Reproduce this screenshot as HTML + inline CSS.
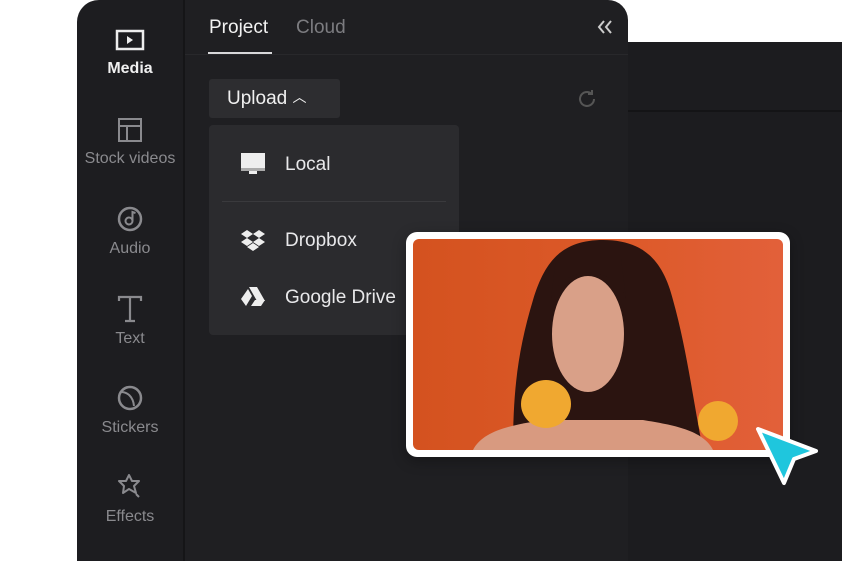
<!DOCTYPE html>
<html><head><style>
*{margin:0;padding:0;box-sizing:border-box}
body{width:842px;height:561px;background:#fff;position:relative;overflow:hidden;font-family:"Liberation Sans",sans-serif}
.a{position:absolute}
.side{left:77px;top:0;width:108px;height:561px;background:#1d1d20;border-top-left-radius:22px;border-right:2px solid #151517}
.panel{left:185px;top:0;width:443px;height:561px;background:#1f1f22;border-top-right-radius:20px}
.right{left:628px;top:42px;width:214px;height:519px;background:#1c1c1f}
.item{position:absolute;left:0;width:106px;text-align:center;color:#8a8a8e;font-size:16px}
.item svg{display:block;margin:0 auto 6px}
.dd{left:209px;top:125px;width:250px;height:210px;background:#2b2b2e;border-radius:4px}
.dd .t{position:absolute;left:76px;color:#e8e8ea;font-size:19px}
</style></head><body>
<div class="a side">
 <div class="item" style="top:28px;color:#f0f0f0;font-weight:bold">
  <svg width="30" height="26" viewBox="0 0 30 26"><rect x="2" y="3" width="26" height="18" fill="none" stroke="#eee" stroke-width="2.5"/><path d="M12 8v8l6-4z" fill="#eee"/></svg>Media</div>
 <div class="item" style="top:116px">
  <svg width="28" height="28" viewBox="0 0 28 28"><rect x="3" y="3" width="22" height="22" fill="none" stroke="#8a8a8e" stroke-width="2"/><path d="M3 10h22M11 10v15" stroke="#8a8a8e" stroke-width="2"/></svg>Stock videos</div>
 <div class="item" style="top:204px">
  <svg width="30" height="30" viewBox="0 0 30 30"><circle cx="15" cy="15" r="11" fill="none" stroke="#8a8a8e" stroke-width="2.5"/><circle cx="14" cy="17" r="3.5" fill="none" stroke="#8a8a8e" stroke-width="2"/><path d="M17.5 17V8l3 1" fill="none" stroke="#8a8a8e" stroke-width="2"/></svg>Audio</div>
 <div class="item" style="top:294px">
  <svg width="30" height="30" viewBox="0 0 30 30"><path d="M4 7V3h22v4M15 3v24M10 27h10" fill="none" stroke="#8a8a8e" stroke-width="2.2"/></svg>Text</div>
 <div class="item" style="top:383px">
  <svg width="30" height="30" viewBox="0 0 30 30"><circle cx="15" cy="15" r="11" fill="none" stroke="#8a8a8e" stroke-width="2.5"/><path d="M6 9c6 0 12 4 13 14" fill="none" stroke="#8a8a8e" stroke-width="2"/></svg>Stickers</div>
 <div class="item" style="top:472px">
  <svg width="30" height="30" viewBox="0 0 30 30"><path d="M14 3l3 6 7 0-5 5 2 7-7-4-6 4 1-7-5-5 7 0z" fill="none" stroke="#8a8a8e" stroke-width="2" stroke-linejoin="round"/><path d="M21 22l3 3" stroke="#8a8a8e" stroke-width="2"/></svg>Effects</div>
</div>
<div class="a panel">
 <div class="a" style="left:24px;top:17px;color:#f2f2f2;font-size:19px">Project</div>
 <div class="a" style="left:111px;top:17px;color:#7c7c80;font-size:19px">Cloud</div>
 <div class="a" style="left:23px;top:52px;width:64px;height:3px;background:#d8d8da"></div>
 <div class="a" style="left:0;top:54px;width:443px;height:1px;background:#28282b"></div>
 <svg class="a" style="left:411px;top:18px" width="18" height="18" viewBox="0 0 18 18"><path d="M8 3L3 9l5 6M15 3l-5 6 5 6" fill="none" stroke="#ccc" stroke-width="2"/></svg>
 <div class="a" style="left:24px;top:79px;width:131px;height:39px;background:#2d2d30;border-radius:3px;color:#f0f0f0;font-size:19px;padding:9px 0 0 18px">Upload <span style="font-size:14px;position:relative;top:-2px">︿</span></div>
 <svg class="a" style="left:390px;top:87px" width="24" height="24" viewBox="0 0 24 24"><path d="M19 12a7 7 0 1 1-2.5-5.4M17 3v4h-4" fill="none" stroke="#555" stroke-width="2"/></svg>
</div>
<div class="a right"><div class="a" style="left:0;top:68px;width:214px;height:2px;background:#141416"></div></div>
<div class="a dd">
 <svg class="a" style="left:31px;top:27px" width="26" height="24" viewBox="0 0 26 24"><rect x="1" y="1" width="24" height="15" fill="#eee"/><rect x="1" y="16" width="24" height="3" fill="#aaa"/><rect x="9" y="19" width="8" height="3" fill="#eee"/></svg>
 <div class="t" style="top:29px">Local</div>
 <div class="a" style="left:13px;top:76px;width:224px;height:1px;background:#3a3a3d"></div>
 <svg class="a" style="left:31px;top:103px" width="26" height="24" viewBox="0 0 26 24"><path d="M7 2l6 4-6 4-6-4zM19 2l6 4-6 4-6-4zM7 10l6 4-6 4-6-4zM19 10l6 4-6 4-6-4zM7 19l6-4 6 4-6 4z" fill="#eee"/></svg>
 <div class="t" style="top:105px">Dropbox</div>
 <svg class="a" style="left:31px;top:160px" width="26" height="24" viewBox="0 0 26 24"><path d="M9 2h8l8 14h-8zM8 4l4 7-6 10-5-7zM11 21l4-6h10l-4 6z" fill="#eee"/></svg>
 <div class="t" style="top:162px">Google Drive</div>
</div>
<div class="a" style="left:406px;top:232px;width:384px;height:225px;background:#fff;border-radius:11px;box-shadow:0 4px 14px rgba(0,0,0,.3)">
 <div class="a" style="left:7px;top:7px;width:370px;height:211px;border-radius:6px;overflow:hidden;background:linear-gradient(90deg,#d4521f,#dd5a2a 60%,#e2603a)">
  <svg width="370" height="211" viewBox="0 0 370 211">
   <path d="M100 211c0-60 5-100 20-150 12-40 30-60 70-60s60 20 70 60c14 50 20 100 30 150z" fill="#2b1410"/>
   <path d="M60 211c10-20 40-25 70-30l100 0c30 5 60 10 70 30z" fill="#d89a80"/>
   <ellipse cx="175" cy="95" rx="36" ry="58" fill="#d9a088"/>
   <path d="M138 60c10-35 65-35 75 0l-5-40h-65z" fill="#2b1410"/>
   <ellipse cx="133" cy="165" rx="25" ry="24" fill="#f0a830"/>
   <ellipse cx="305" cy="182" rx="20" ry="20" fill="#f0a830"/>
  </svg>
 </div>
</div>
<svg class="a" style="left:752px;top:425px" width="70" height="70" viewBox="0 0 70 70"><path d="M6 4l58 22-22 8-10 24z" fill="#1fc6dd" stroke="#fff" stroke-width="4" stroke-linejoin="round"/></svg>
</body></html>
